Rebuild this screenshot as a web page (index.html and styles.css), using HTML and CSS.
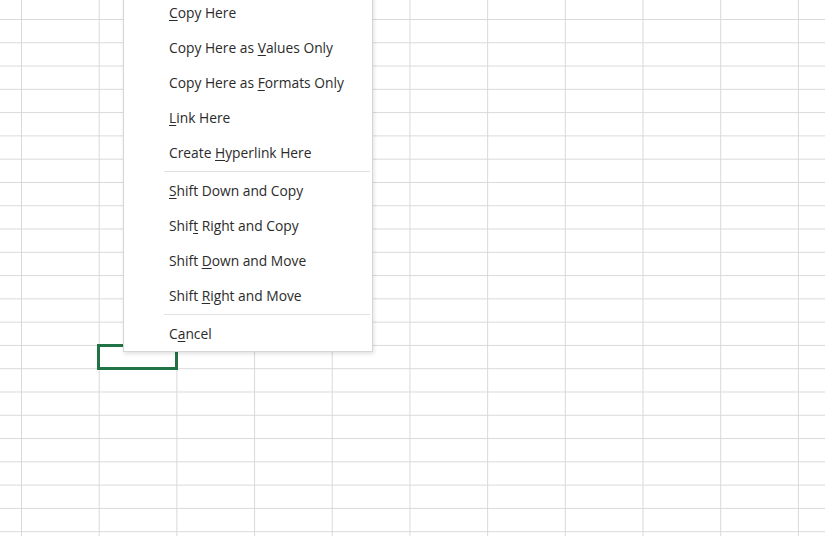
FILE: index.html
```html
<!DOCTYPE html>
<html>
<head>
<meta charset="utf-8">
<link rel="stylesheet" href="styles.css">
</head>
<body>
<div class="sheet">
  <div class="selection"></div>
  <div class="menu">
    <div class="item"><u>C</u>opy Here</div>
    <div class="item">Copy Here as <u>V</u>alues Only</div>
    <div class="item">Copy Here as <u>F</u>ormats Only</div>
    <div class="item"><u>L</u>ink Here</div>
    <div class="item">Create <u>H</u>yperlink Here</div>
    <div class="sep"></div>
    <div class="item"><u>S</u>hift Down and Copy</div>
    <div class="item">Shif<u>t</u> Right and Copy</div>
    <div class="item">Shift <u>D</u>own and Move</div>
    <div class="item">Shift <u>R</u>ight and Move</div>
    <div class="sep"></div>
    <div class="item">C<u>a</u>ncel</div>
  </div>
</div>
</body>
</html>
```
FILE: styles.css
```css
html, body {
  margin: 0;
  padding: 0;
  background: #ffffff;
}
.sheet {
  position: relative;
  width: 825px;
  height: 536px;
  overflow: hidden;
  background-color: #ffffff;
  background-image:
    linear-gradient(to right, #d9d9d9 1px, transparent 1px),
    linear-gradient(to bottom, #d9d9d9 1px, transparent 1px);
  background-size: 77.7px 100%, 100% 23.29px;
  background-position: 21px 0, 0 19px;
}
.selection {
  position: absolute;
  left: 97px;
  top: 344px;
  width: 75px;
  height: 20px;
  border: 3px solid #217346;
}
.menu {
  position: absolute;
  left: 123px;
  top: -5px;
  width: 248px;
  background: #ffffff;
  border: 1px solid #d6d6d6;
  border-top: none;
  box-shadow: 1px 2px 4px rgba(0, 0, 0, 0.12);
  display: flex;
  flex-direction: column;
  font-family: "Segoe UI", "Open Sans", "Noto Sans", sans-serif;
  font-size: 13.8px;
  color: #2b2b2b;
}
.item {
  height: 35px;
  line-height: 35px;
  padding-left: 45px;
  white-space: nowrap;
}
.item u {
  text-underline-offset: 2px;
}
.sep {
  height: 1px;
  margin: 1px 2px 1px 40px;
  background: #e1e1e1;
}
```
